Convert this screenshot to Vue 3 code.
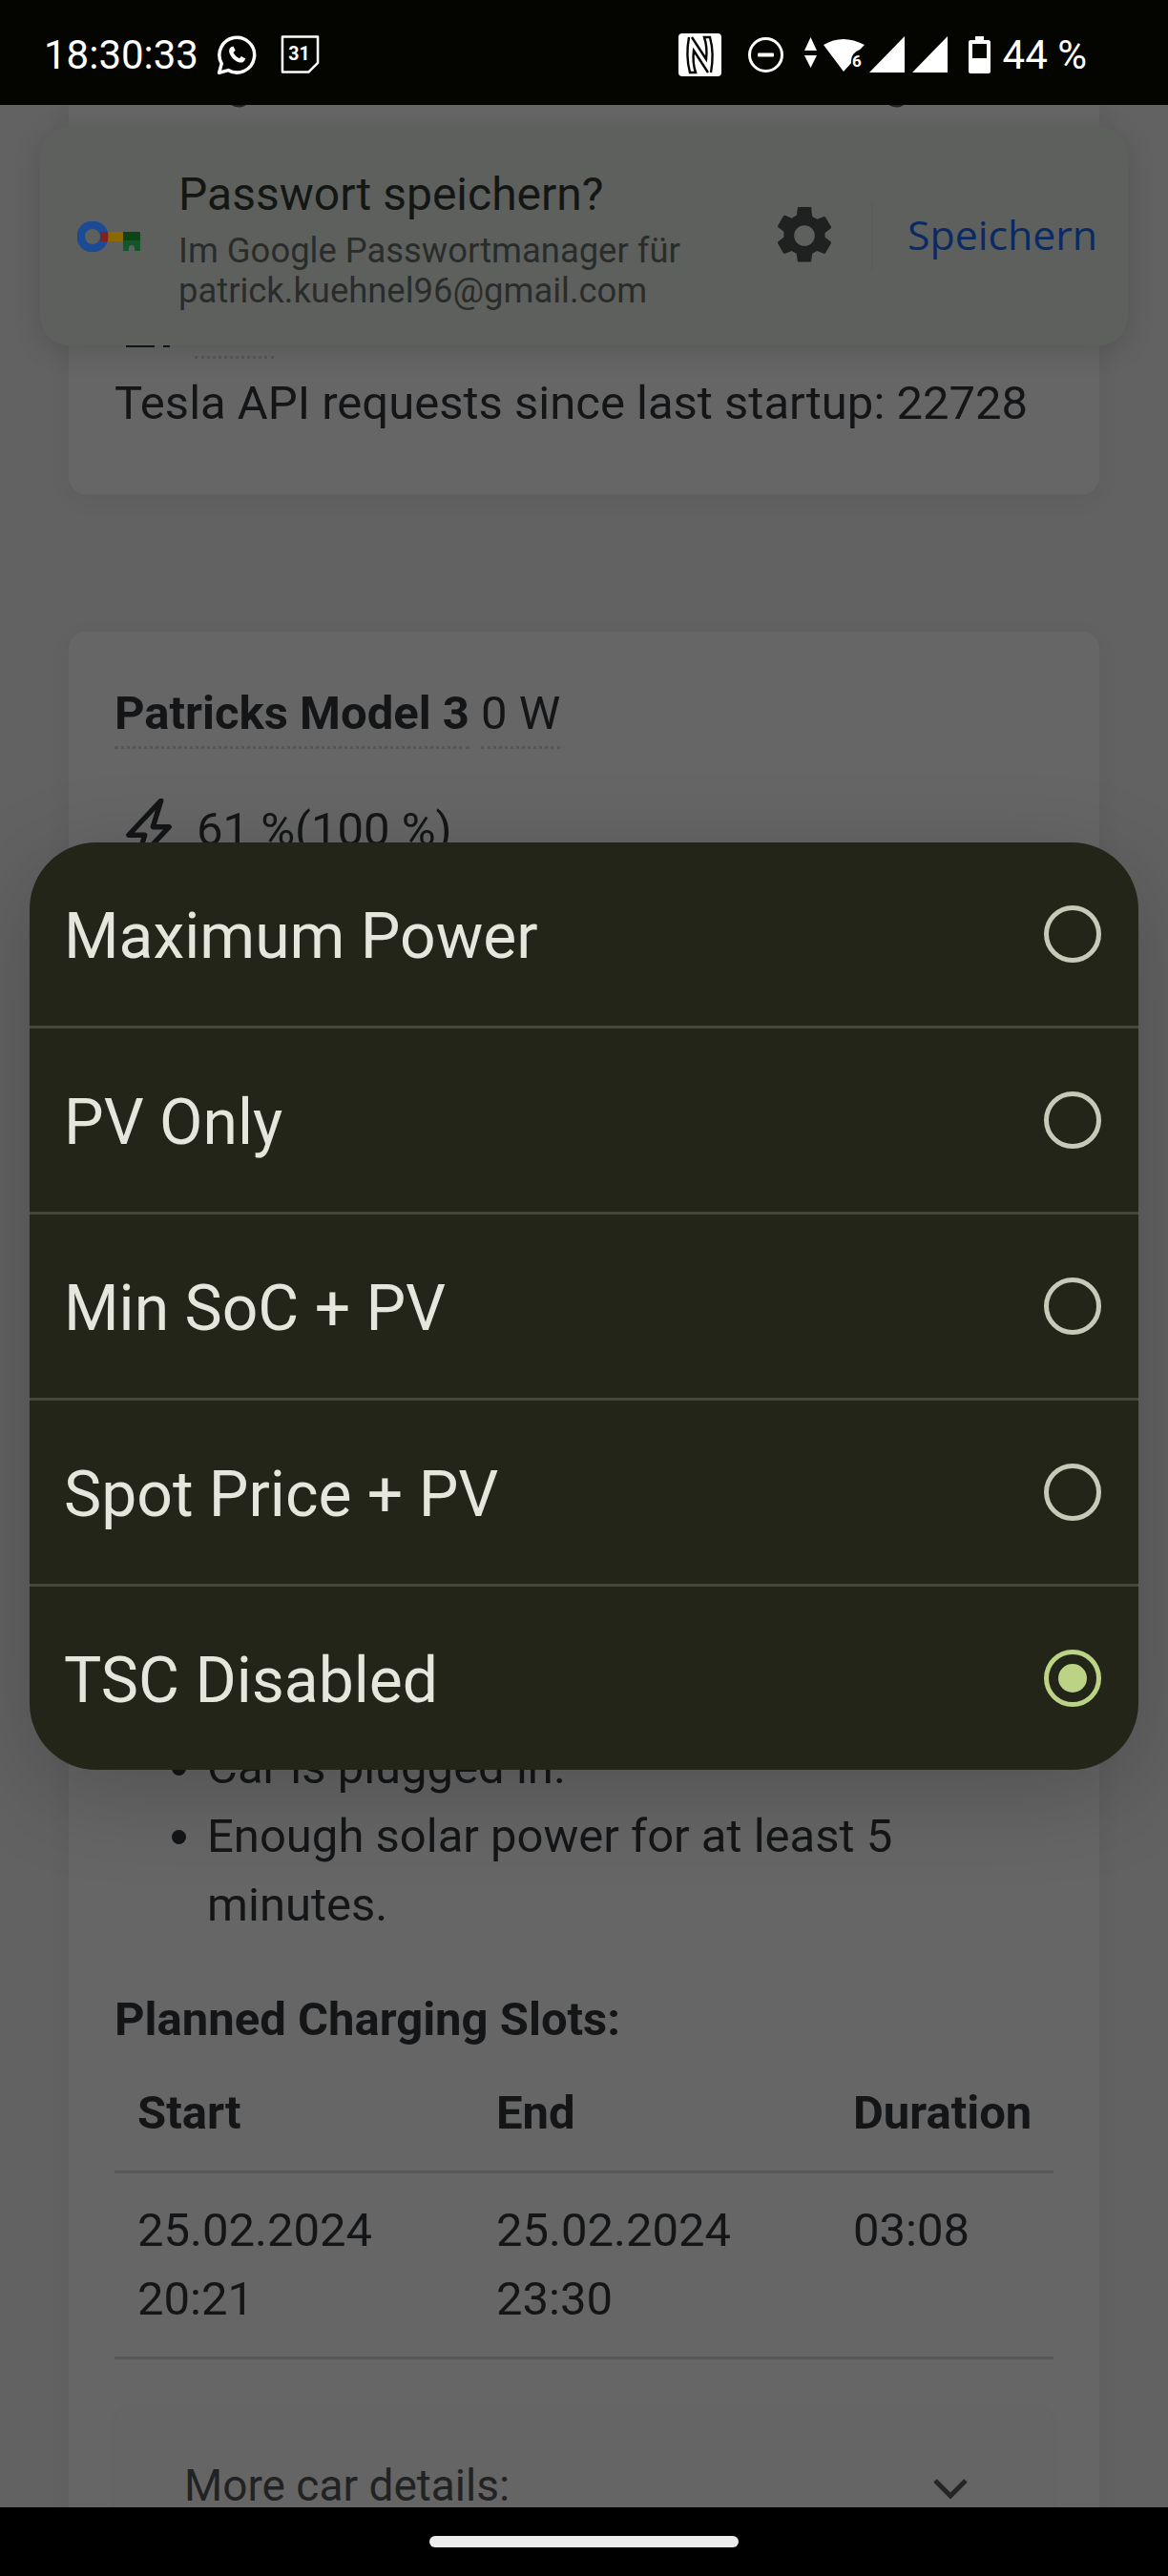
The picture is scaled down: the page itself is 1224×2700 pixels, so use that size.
<script setup>
const modes = [
  { name: 'Maximum Power', selected: false },
  { name: 'PV Only', selected: false },
  { name: 'Min SoC + PV', selected: false },
  { name: 'Spot Price + PV', selected: false },
  { name: 'TSC Disabled', selected: true }
]
</script>

<template>
  <div class="screen">
    <header class="status-bar">
      <div class="status-left">
        <span class="clock">18:30:33</span>
        <svg class="ic-whatsapp" viewBox="0 0 48 48" width="42" height="42">
          <path d="M3 46l3-11a21 21 0 1 1 8 8z" fill="none" stroke="#fff" stroke-width="4" stroke-linejoin="round" />
          <path d="M17 13c-2 1-4 4-3 8 2 7 8 13 15 15 4 1 7-1 8-3l1-3-6-3-3 3c-4-2-7-5-9-9l3-3-3-6z" fill="#fff" transform="translate(24 24) scale(.8) translate(-25 -24)" />
        </svg>
        <svg class="ic-cal" viewBox="0 0 42 42" width="41" height="42">
          <path d="M2 2h38v28l-10 10H2z" fill="none" stroke="#fff" stroke-width="2.600" stroke-linejoin="round" />
          <text x="20" y="27" font-size="20" font-weight="700" fill="#fff" text-anchor="middle" font-family="Roboto, sans-serif">31</text>
        </svg>
      </div>
      <div class="status-right">
        <svg class="ic-nfc" viewBox="0 0 45 45" width="45" height="45">
          <rect width="45" height="45" rx="4" fill="#fff" />
          <g fill="none" stroke="#040500" stroke-width="2.400">
            <path d="M11 4c-2 11-2 26 1 37h6c-2-6-3-15-2-23l15 23" />
            <path d="M34 41c2-11 2-26-1-37h-6c2 6 3 15 2 23L14 4" />
          </g>
        </svg>
        <svg class="ic-dnd" viewBox="0 0 37 37" width="37" height="37">
          <circle cx="18.500" cy="18.500" r="17" fill="none" stroke="#fff" stroke-width="3" />
          <rect x="10" y="16.500" width="17" height="4" rx="1" fill="#fff" />
        </svg>
        <svg class="ic-wifi" viewBox="0 0 63 37" width="63" height="37">
          <path d="M6.500 0L13 14H0zM0 19h13L6.500 32z" fill="#fff" />
          <path d="M20 8Q40-4 63 8L58 13Q48 17 49 27L41 36z" fill="#fff" />
          <text x="55" y="31" font-size="17" font-weight="700" fill="#fff" text-anchor="middle" font-family="Roboto, sans-serif">6</text>
        </svg>
        <svg class="ic-signal" viewBox="0 0 37 38" width="37" height="38"><path d="M37 0v38H0z" fill="#fff" /></svg>
        <svg class="ic-signal" viewBox="0 0 37 38" width="37" height="38"><path d="M37 0v38H0z" fill="#fff" /></svg>
        <svg class="ic-battery" viewBox="0 0 23 39" width="23" height="39">
          <path d="M7 0h9v4h5c1 0 2 1 2 2v31c0 1-1 2-2 2H2c-1 0-2-1-2-2V6c0-1 1-2 2-2h5z" fill="#fff" />
          <rect x="4" y="8" width="15" height="15" fill="#040500" />
        </svg>
        <span class="battery-text">44 %</span>
      </div>
    </header>

    <main class="viewport">
      <div class="page">
        <section class="card first-card">
          <p class="scrolled-line"><span>g</span><span class="comma">,</span><span class="last-g">g</span></p>
          <div class="stat-row">
            <span class="stat-icon"></span>
            <span class="stat-dash"></span>
            <span class="stat-value"></span>
          </div>
          <p class="api-line">Tesla API requests since last startup: 22728</p>
        </section>

        <section class="card car-card">
          <div class="car-title">
            <span class="dotted"><strong>Patricks Model 3</strong></span>
            <span class="dotted">0 W</span>
          </div>
          <div class="soc-row">
            <svg class="ic-bolt" viewBox="0 0 16 16" width="68" height="68">
              <path fill="#131517" stroke="#131517" stroke-width=".25" d="M11.251.068a.5.5 0 0 1 .227.58L9.677 6.500H13a.5.5 0 0 1 .364.843l-8 8.500a.5.5 0 0 1-.842-.49L6.323 9.500H3a.5.5 0 0 1-.364-.843l8-8.500a.5.5 0 0 1 .615-.09zM4.157 8.500H7a.5.5 0 0 1 .478.647L6.110 13.590l5.732-6.090H9a.5.5 0 0 1-.478-.647L9.890 2.410 4.157 8.500z" />
            </svg>
            <span>61 %(100 %)</span>
          </div>
          <ul class="conditions">
            <li>Car is plugged in.</li>
            <li>Enough solar power for at least 5 minutes.</li>
          </ul>
          <p class="slots-title">Planned Charging Slots:</p>
          <table class="slots">
            <thead>
              <tr>
                <th>Start</th>
                <th>End</th>
                <th>Duration</th>
              </tr>
            </thead>
            <tbody>
              <tr>
                <td>25.02.2024 20:21</td>
                <td>25.02.2024 23:30</td>
                <td>03:08</td>
              </tr>
            </tbody>
          </table>
          <div class="details">
            <span>More car details:</span>
            <svg viewBox="0 0 36 24" width="36" height="24">
              <path d="M2 3l16 16L34 3" fill="none" stroke="#242526" stroke-width="5" />
            </svg>
          </div>
        </section>
      </div>

      <div class="password-prompt">
        <svg class="ic-key" viewBox="0 0 66 32" width="66" height="32">
          <rect x="32" y="11" width="17" height="10" fill="#8a6a00" />
          <path d="M48 11h18v9H48z" fill="#0c4416" />
          <path d="M48 20h18v11h-6v-3a2.500 2.500 0 0 0-6 0v3h-6z" fill="#14552a" />
          <circle cx="16" cy="16" r="12.250" fill="none" stroke="#1d4a94" stroke-width="8.500" />
          <rect x="24" y="11" width="8" height="10" fill="#7c2222" />
        </svg>
        <div class="prompt-text">
          <div class="prompt-title">Passwort speichern?</div>
          <div class="prompt-sub">Im Google Passwortmanager für<br />patrick.kuehnel96@gmail.com</div>
        </div>
        <svg class="ic-gear" viewBox="0 0 24 24" width="72" height="72">
          <path fill="#1f2120" d="M19.14 12.94c.04-.3.06-.61.06-.94s-.02-.64-.07-.94l2.03-1.58a.49.49 0 0 0 .12-.61l-1.92-3.32a.49.49 0 0 0-.59-.22l-2.39.96a7 7 0 0 0-1.62-.94l-.36-2.54A.48.48 0 0 0 13.92 2h-3.84a.47.47 0 0 0-.47.41l-.36 2.54c-.59.24-1.13.57-1.62.94l-2.39-.96a.49.49 0 0 0-.59.22L2.73 8.47a.48.48 0 0 0 .12.61l2.03 1.58c-.05.3-.09.63-.09.94s.02.64.07.94l-2.03 1.58a.49.49 0 0 0-.12.61l1.92 3.32c.12.22.37.29.59.22l2.39-.96c.5.38 1.03.7 1.62.94l.36 2.54c.05.24.24.41.48.41h3.84c.24 0 .44-.17.47-.41l.36-2.54c.59-.24 1.13-.56 1.62-.94l2.39.96c.22.08.47 0 .59-.22l1.92-3.32a.48.48 0 0 0-.12-.61l-2.01-1.58zM12 15.6a3.600 3.600 0 1 1 0-7.200 3.600 3.600 0 0 1 0 7.200z" />
        </svg>
        <span class="prompt-divider"></span>
        <span class="prompt-save">Speichern</span>
      </div>

      <div class="mode-dialog">
        <div v-for="mode in modes" :key="mode.name" class="mode-row">
          <span class="mode-name">{{ mode.name }}</span>
          <span class="radio" :class="{ selected: mode.selected }"></span>
        </div>
      </div>
    </main>

    <footer class="nav-bar">
      <span class="nav-pill"></span>
    </footer>
  </div>
</template>

<style>
body {
  background: #000;
}
</style>

<style scoped>
.screen {
  width: 1224px;
  height: 2700px;
  display: flex;
  flex-direction: column;
  overflow: hidden;
  font-family: Roboto, "Noto Sans", sans-serif;
  color: #131517;
}

.status-bar {
  height: 110px;
  flex: none;
  background: #040500;
  color: #fff;
  display: flex;
  justify-content: space-between;
  align-items: center;
  padding: 4px 85px 0 46px;
  box-sizing: border-box;
}

.status-left,
.status-right {
  display: flex;
  align-items: center;
}

.clock {
  font-size: 42px;
  font-weight: 400;
  margin-right: 19px;
}

.ic-whatsapp {
  margin-right: 25px;
}

.ic-nfc {
  margin-right: 28px;
}

.ic-dnd {
  margin-right: 22px;
}

.ic-wifi {
  margin-right: 5px;
}

.ic-signal {
  margin-right: 8px;
}

.ic-battery {
  margin-left: 14px;
  margin-right: 13px;
}

.battery-text {
  font-size: 42px;
  font-weight: 400;
}

.viewport {
  flex: 1;
  position: relative;
  overflow: hidden;
  background: #626262;
}

.page {
  padding: 0 72px;
}

.card {
  background: #666;
  border-radius: 18px;
  padding: 0 48px;
  box-shadow: 0 6px 24px rgba(0, 0, 0, 0.05);
}

/* page is scrolled, the top of this card sits under the status bar */
.first-card {
  margin-top: -60px;
  height: 468px;
  box-sizing: border-box;
}

.scrolled-line {
  margin: 0;
  height: 72px;
  font-size: 49px;
  line-height: 72px;
  color: #222;
  display: flex;
  padding-left: 117px;
}

.comma {
  margin-left: 324px;
}

.last-g {
  margin-left: 328px;
}

.stat-row {
  height: 265px;
  box-sizing: border-box;
  padding-bottom: 11px;
  display: flex;
  align-items: flex-end;
}

.stat-icon,
.stat-dash {
  height: 2px;
  margin-bottom: 12px;
  background: #131517;
}

.stat-icon {
  width: 30px;
  margin-left: 12px;
}

.stat-dash {
  width: 7px;
  margin-left: 9px;
}

.stat-value {
  width: 83px;
  margin-left: 26px;
  border-bottom: 3px dotted #575757;
}

.api-line {
  margin: 0;
  font-size: 49px;
  line-height: 72px;
}

.car-card {
  margin-top: 144px;
  padding-top: 50px;
  padding-bottom: 60px;
  height: 2000px;
  font-size: 49px;
  line-height: 72px;
}

.car-title {
  display: flex;
  gap: 12px;
  height: 76px;
}

.dotted {
  height: 70px;
  border-bottom: 3px dotted #575757;
}

.soc-row {
  display: flex;
  align-items: flex-start;
  margin-top: 46px;
  height: 74px;
}

.ic-bolt {
  flex: none;
  margin: 3px 16px 0 2px;
}

.conditions {
  margin: 909px 0 0;
  padding: 0 0 0 97px;
}

.conditions li {
  padding-right: 20px;
}

.slots-title {
  margin: 48px 0 0;
  font-weight: 700;
}

.slots {
  width: 984px;
  margin-top: 2px;
  border-collapse: collapse;
  table-layout: fixed;
}

.slots th,
.slots td {
  box-sizing: border-box;
  padding: 24px;
  text-align: left;
  vertical-align: top;
  font-weight: 400;
  border-bottom: 3px solid #575757;
}

.slots th {
  font-weight: 700;
}

.slots th:nth-child(1) {
  width: 376px;
}

.slots th:nth-child(2) {
  width: 374px;
}

.details {
  width: 984px;
  box-sizing: border-box;
  margin-top: 50px;
  padding: 46px 90px 0 73px;
  height: 300px;
  border-radius: 18px;
  background: #656565;
  box-shadow: 0 1px 6px rgba(0, 0, 0, 0.06);
  display: flex;
  justify-content: space-between;
  align-items: flex-start;
  color: #212223;
  font-size: 46px;
}

.details svg {
  margin-top: 28px;
}

.password-prompt {
  position: absolute;
  left: 42px;
  top: 23px;
  width: 1140px;
  height: 229px;
  box-sizing: border-box;
  background: #5e605e;
  border-radius: 30px;
  box-shadow: 0 6px 30px rgba(0, 0, 0, 0.14);
  display: flex;
  align-items: center;
}

.ic-key {
  margin-left: 39px;
  margin-right: 40px;
  flex: none;
}

.prompt-text {
  flex: 1;
  padding-top: 5px;
}

.prompt-title {
  font-size: 48px;
  line-height: 58px;
  color: #141614;
}

.prompt-sub {
  font-size: 36.4px;
  line-height: 42px;
  color: #2a2c2a;
  margin-top: 9px;
}

.ic-gear {
  flex: none;
  margin-right: 34px;
  margin-bottom: 2px;
}

.prompt-divider {
  width: 2px;
  height: 71px;
  background: #5b5d5b;
}

.prompt-save {
  font-family: "Open Sans", sans-serif;
  font-size: 42.8px;
  color: #0a2a66;
  margin: 0 32px 4px 36px;
}

.mode-dialog {
  position: absolute;
  left: 31px;
  top: 773px;
  width: 1162px;
  height: 972px;
  background: #222518;
  border-radius: 70px;
  box-shadow: 0 24px 100px rgba(0, 0, 0, 0.2);
  color: #e6e6dc;
  font-size: 66px;
  display: flex;
  flex-direction: column;
  overflow: hidden;
}

.mode-row {
  flex: 1;
  display: flex;
  align-items: center;
  justify-content: space-between;
  padding: 0 39px 0 36px;
  border-top: 3px solid #444739;
}

.mode-row:first-child {
  border-top: none;
}

.mode-name {
  padding-top: 5px;
}

.radio {
  width: 60px;
  height: 60px;
  box-sizing: border-box;
  border: 5px solid #c6cab8;
  border-radius: 50%;
  display: flex;
  align-items: center;
  justify-content: center;
}

.radio.selected {
  border-color: #bcd284;
}

.radio.selected::after {
  content: "";
  width: 30px;
  height: 30px;
  border-radius: 50%;
  background: #bcd284;
}

.nav-bar {
  height: 72px;
  flex: none;
  background: #000;
  display: flex;
  align-items: center;
  justify-content: center;
}

.nav-pill {
  width: 324px;
  height: 12px;
  border-radius: 6px;
  background: #ececec;
}
</style>
